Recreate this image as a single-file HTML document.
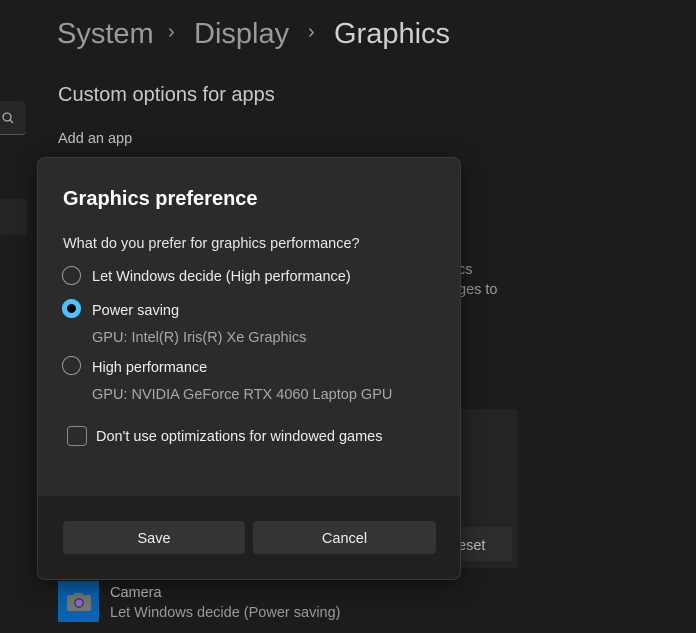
<!DOCTYPE html>
<html><head><style>
body{margin:0;width:696px;height:633px;background:#1c1c1c;font-family:"Liberation Sans",sans-serif;position:relative;overflow:hidden;color:#fff}
.a{position:absolute;white-space:nowrap}
</style></head><body>
<div class="a" style="left:57px;top:18px;font-size:29px;color:#9a9a9a">System</div>
<div class="a" style="left:168px;top:21px;font-size:20px;color:#9a9a9a">›</div>
<div class="a" style="left:194px;top:18px;font-size:29px;color:#9a9a9a">Display</div>
<div class="a" style="left:308px;top:21px;font-size:20px;color:#9a9a9a">›</div>
<div class="a" style="left:334px;top:18px;font-size:29px;color:#cfcfcf">Graphics</div>
<div class="a" style="left:58px;top:84px;font-size:20px;color:#c8c8c8">Custom options for apps</div>
<div class="a" style="left:58px;top:131px;font-size:14.5px;color:#c0c0c0">Add an app</div>
<div class="a" style="left:-6px;top:101px;width:32px;height:33px;background:#262626;border-radius:4px;border-bottom:1px solid #555"></div>
<svg class="a" style="left:1px;top:111px" width="14" height="14"><circle cx="6" cy="6" r="4" stroke="#aaa" fill="none" stroke-width="1.3"/><line x1="9" y1="9" x2="12" y2="12" stroke="#aaa" stroke-width="1.3"/></svg>
<div class="a" style="left:-6px;top:199px;width:33px;height:36px;background:#252525;border-radius:4px"></div>
<div class="a" style="left:458px;top:262px;font-size:14.5px;color:#9a9a9a">cs</div>
<div class="a" style="left:458px;top:282px;font-size:14.5px;color:#9a9a9a">ges to</div>
<div class="a" style="left:440px;top:409px;width:78px;height:159px;background:#242424;border-radius:4px"></div>
<div class="a" style="left:440px;top:527px;width:72px;height:34px;background:#2d2d2d;border-radius:4px"></div>
<div class="a" style="left:458px;top:538px;font-size:14.5px;color:#bbb">eset</div>
<div class="a" style="left:58px;top:581px;width:41px;height:41px;background:#0864b0"></div>
<svg class="a" style="left:66px;top:592px" width="26" height="20"><rect x="1" y="3" width="24" height="16" rx="2" fill="#777"/><rect x="8" y="1" width="9" height="4" fill="#777"/><circle cx="13" cy="11" r="5" fill="#444"/><circle cx="13" cy="11" r="3.5" fill="#8a6ad8"/></svg>
<div class="a" style="left:110px;top:585px;font-size:14.5px;color:#bdbdbd">Camera</div>
<div class="a" style="left:110px;top:605px;font-size:14.5px;color:#9a9a9a">Let Windows decide (Power saving)</div>
<div class="a" style="left:37px;top:157px;width:422px;height:421px;background:#2b2b2b;border:1px solid #3a3a3a;border-radius:8px;overflow:hidden;box-shadow:0 6px 24px rgba(0,0,0,.5)">
 <div class="a" style="left:0;top:338px;width:424px;height:90px;background:#202020"></div>
 <div class="a" style="left:25px;top:30px;font-size:20px;font-weight:bold;color:#fff">Graphics preference</div>
 <div class="a" style="left:25px;top:78px;font-size:14.5px;color:#e8e8e8">What do you prefer for graphics performance?</div>
 <div class="a" style="left:24px;top:108px;width:17px;height:17px;border:1.5px solid #9a9a9a;border-radius:50%"></div>
 <div class="a" style="left:54px;top:111px;font-size:14.5px;color:#eee">Let Windows decide (High performance)</div>
 <div class="a" style="left:24px;top:141px;width:9px;height:9px;border:5px solid #4cc2ff;background:#000;border-radius:50%"></div>
 <div class="a" style="left:54px;top:145px;font-size:14.5px;color:#eee">Power saving</div>
 <div class="a" style="left:54px;top:172px;font-size:14.5px;color:#a8a8a8">GPU: Intel(R) Iris(R) Xe Graphics</div>
 <div class="a" style="left:24px;top:198px;width:17px;height:17px;border:1.5px solid #9a9a9a;border-radius:50%"></div>
 <div class="a" style="left:54px;top:202px;font-size:14.5px;color:#eee">High performance</div>
 <div class="a" style="left:54px;top:229px;font-size:14.5px;color:#a8a8a8">GPU: NVIDIA GeForce RTX 4060 Laptop GPU</div>
 <div class="a" style="left:29px;top:268px;width:18px;height:18px;border:1.5px solid #8a8a8a;border-radius:4px"></div>
 <div class="a" style="left:58px;top:271px;font-size:14.5px;color:#eee">Don't use optimizations for windowed games</div>
 <div class="a" style="left:25px;top:363px;width:182px;height:33px;background:#343434;border-radius:4px;text-align:center;line-height:37px;font-size:14.5px;color:#eee">Save</div>
 <div class="a" style="left:215px;top:363px;width:183px;height:33px;background:#343434;border-radius:4px;text-align:center;line-height:37px;font-size:14.5px;color:#eee">Cancel</div>
</div>
</body></html>
